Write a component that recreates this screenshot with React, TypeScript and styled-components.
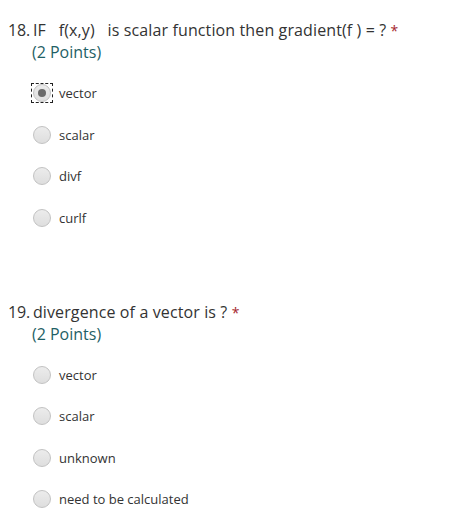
import styled, { createGlobalStyle } from 'styled-components';

interface Question {
  number: number;
  title: string;
  points: number;
  options: string[];
  selected?: number;
}

const questions: Question[] = [
  {
    number: 18,
    title: 'IF\u00a0\u00a0\u00a0f(x,y)\u00a0\u00a0\u00a0is scalar function then gradient(f ) = ?',
    points: 2,
    options: ['vector', 'scalar', 'divf', 'curlf'],
    selected: 0,
  },
  {
    number: 19,
    title: 'divergence of a vector is ?',
    points: 2,
    options: ['vector', 'scalar', 'unknown', 'need to be calculated'],
  },
];

const GlobalStyle = createGlobalStyle`
  body {
    margin: 0;
    background: #ffffff;
    font-family: "Open Sans", "Noto Sans", sans-serif;
    color: #333333;
  }
`;

const App = () => {
  return (
    <Page>
      <GlobalStyle />
      {questions.map((q) => (
        <QuestionBlock key={q.number}>
          <TitleRow>
            <QuestionNumber>{q.number}.</QuestionNumber>
            <TitleBody>
              <TitleText>
                {q.title} <Required>*</Required>
              </TitleText>
              <Points>({q.points} Points)</Points>
            </TitleBody>
          </TitleRow>
          <OptionList>
            {q.options.map((opt, i) => (
              <OptionRow key={opt}>
                <FocusBox $focused={q.selected === i}>
                  <Radio $checked={q.selected === i} />
                </FocusBox>
                <OptionLabel>{opt}</OptionLabel>
              </OptionRow>
            ))}
          </OptionList>
        </QuestionBlock>
      ))}
    </Page>
  );
};

export default App;

const Page = styled.div`
  width: 473px;
  height: 527px;
  padding: 19px 0 0 8px;
  box-sizing: border-box;

  display: flex;
  flex-direction: column;
  row-gap: 72px;
`;

const QuestionBlock = styled.section`
  display: flex;
  flex-direction: column;
`;

const TitleRow = styled.div`
  display: flex;
  column-gap: 3px;
`;

const QuestionNumber = styled.span`
  font-size: 16px;
  line-height: 22px;
  letter-spacing: -0.2px;
  color: #333333;
`;

const TitleBody = styled.div`
  display: flex;
  flex-direction: column;
`;

const TitleText = styled.span`
  font-size: 16px;
  line-height: 22px;
  letter-spacing: 0.12px;
  color: #333333;
`;

const Required = styled.span`
  color: #a4262c;
  font-size: 14px;
`;

const Points = styled.span`
  margin-left: -1px;

  font-size: 16px;
  line-height: 20px;
  color: #1f5f66;
`;

const OptionList = styled.div`
  margin-top: 20px;
  padding-left: 23px;

  display: flex;
  flex-direction: column;
  row-gap: 19.5px;
`;

const OptionRow = styled.label`
  height: 22px;

  display: flex;
  align-items: center;
  column-gap: 6px;
`;

const FocusBox = styled.span<{ $focused: boolean }>`
  width: 22px;
  height: 20px;
  box-sizing: border-box;

  display: flex;
  align-items: center;
  justify-content: center;

  border: 1px dashed ${({ $focused }) => ($focused ? '#222222' : 'transparent')};
`;

const Radio = styled.span<{ $checked: boolean }>`
  width: 18px;
  height: 18px;
  box-sizing: border-box;
  border-radius: 50%;

  display: flex;
  align-items: center;
  justify-content: center;

  border: 1px solid #c2c2c2;
  background: linear-gradient(#ececec, #dedede);

  &::after {
    content: '';
    display: ${({ $checked }) => ($checked ? 'block' : 'none')};
    width: 8px;
    height: 8px;
    border-radius: 50%;
    background: #6a6a6a;
  }
`;

const OptionLabel = styled.span`
  font-size: 13px;
  line-height: 18px;
  color: #333333;
`;
